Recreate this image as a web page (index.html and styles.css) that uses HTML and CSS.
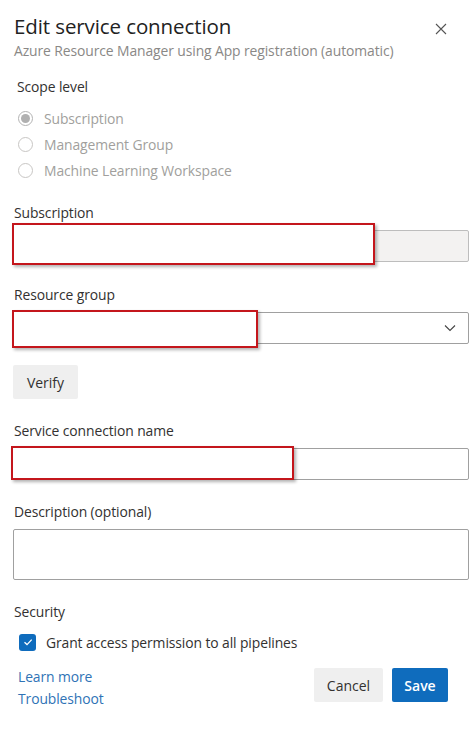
FILE: index.html
```html
<!DOCTYPE html>
<html lang="en">
<head>
<meta charset="utf-8">
<title>Edit service connection</title>
<link rel="stylesheet" href="styles.css">
</head>
<body>
<div class="panel">
  <header class="head">
    <div class="head-text">
      <h1 class="title">Edit service connection</h1>
      <div class="subtitle">Azure Resource Manager using App registration (automatic)</div>
    </div>
    <button class="close" aria-label="Close">
      <svg width="12" height="12" viewBox="0 0 12 12"><path d="M1 1 L11 11 M11 1 L1 11" stroke="#555" stroke-width="1.1" fill="none"/></svg>
    </button>
  </header>

  <div class="section scope">
    <div class="label">Scope level</div>
    <div class="radios">
      <div class="radio-row"><span class="radio checked"></span><span>Subscription</span></div>
      <div class="radio-row"><span class="radio"></span><span>Management Group</span></div>
      <div class="radio-row"><span class="radio"></span><span>Machine Learning Workspace</span></div>
    </div>
  </div>

  <div class="field f-sub">
    <div class="label">Subscription</div>
    <div class="box-wrap">
      <div class="input disabled"></div>
      <div class="redact r-sub"></div>
    </div>
  </div>

  <div class="field f-rg">
    <div class="label">Resource group</div>
    <div class="box-wrap">
      <div class="input select">
        <svg class="chev" width="12" height="8" viewBox="0 0 12 8"><path d="M1 1.5 L6 6.5 L11 1.5" stroke="#444" stroke-width="1.1" fill="none"/></svg>
      </div>
      <div class="redact r-rg"></div>
    </div>
  </div>

  <button class="btn verify">Verify</button>

  <div class="field f-name">
    <div class="label">Service connection name</div>
    <div class="box-wrap">
      <div class="input"></div>
      <div class="redact r-name"></div>
    </div>
  </div>

  <div class="field f-desc">
    <div class="label">Description (optional)</div>
    <div class="input textarea"></div>
  </div>

  <div class="section security">
    <div class="label">Security</div>
    <div class="check-row">
      <span class="checkbox">
        <svg width="12" height="12" viewBox="0 0 12 12"><path d="M2.5 6.3 L5 8.6 L9.7 3.6" stroke="#fff" stroke-width="1.3" fill="none"/></svg>
      </span>
      <span>Grant access permission to all pipelines</span>
    </div>
  </div>

  <footer class="foot">
    <div class="links">
      <a href="#">Learn more</a>
      <a href="#">Troubleshoot</a>
    </div>
    <div class="actions">
      <button class="btn cancel">Cancel</button>
      <button class="btn save">Save</button>
    </div>
  </footer>
</div>
</body>
</html>
```
FILE: styles.css
```css
* { box-sizing: border-box; }
html, body { margin: 0; padding: 0; background: #fff; }
body {
  font-family: "Open Sans", "Noto Sans", "Liberation Sans", sans-serif;
  color: #323130;
  width: 474px;
  height: 735px;
  overflow: hidden;
}
.panel {
  padding: 13px 5px 0 13px;
  display: flex;
  flex-direction: column;
}
.head {
  display: flex;
  justify-content: space-between;
  align-items: flex-start;
}
.title {
  margin: 0 0 0 1px;
  font-size: 20.5px;
  font-weight: 400;
  line-height: 26px;
  color: #222;
  letter-spacing: -0.1px;
}
.subtitle {
  margin: 1px 0 0 1px;
  font-size: 13.9px;
  line-height: 22px;
  color: #8a8886;
  letter-spacing: -0.1px;
}
.close {
  background: none;
  border: none;
  padding: 0;
  margin: 10px 22px 0 0;
  width: 12px;
  height: 12px;
  display: flex;
}
.label {
  font-size: 13.9px;
  line-height: 20px;
  color: #323130;
  font-weight: 400;
  letter-spacing: -0.1px;
}
.scope { margin-top: 15px; }
.scope .label { padding-left: 4px; }
.radios { margin-top: 8px; display: flex; flex-direction: column; }
.radio-row {
  display: flex;
  align-items: center;
  height: 26px;
  font-size: 13.9px;
  color: #a19f9d;
  padding-left: 5px;
  letter-spacing: -0.1px;
}
.radio {
  width: 15px;
  height: 15px;
  border-radius: 50%;
  border: 1px solid #c8c6c4;
  margin-right: 11px;
  display: inline-flex;
  align-items: center;
  justify-content: center;
  background: #fff;
}
.radio.checked { border-color: #b3b3b3; }
.radio.checked::after {
  content: "";
  width: 9px;
  height: 9px;
  border-radius: 50%;
  background: #b0b0b0;
}
.field { display: flex; flex-direction: column; }
.field .label { margin-bottom: 7px; padding-left: 1px; }
.f-sub { margin-top: 20px; }
.f-rg { margin-top: 23px; }
.f-name { margin-top: 22px; }
.f-desc { margin-top: 22px; }
.box-wrap { position: relative; }
.input {
  height: 32px;
  border: 1px solid #a0a0a0;
  border-radius: 2px;
  background: #fff;
}
.input.disabled { background: #f3f2f1; border-color: #bdbdbd; }
.input.select {
  display: flex;
  align-items: center;
  justify-content: flex-end;
  padding-right: 12px;
}
.input.textarea { height: 51px; }
.redact {
  position: absolute;
  background: #fff;
  border: 2px solid #c4161c;
  box-shadow: 2px 2px 3px rgba(0,0,0,0.3);
}
.r-sub { left: -1px; top: -7px; width: 363px; height: 42px; }
.r-rg { left: -1px; top: -2px; width: 246px; height: 38px; }
.r-name { left: -2px; top: -2px; width: 283px; height: 34px; }
.btn {
  font-family: inherit;
  font-size: 14px;
  border: none;
  border-radius: 2px;
  height: 34px;
  padding: 0 14px;
  cursor: pointer;
}
.verify {
  align-self: flex-start;
  margin-top: 21px;
  background: #efefef;
  color: #323130;
  width: 65px;
  padding: 0;
}
.security { margin-top: 22px; }
.security .label { padding-left: 1px; }
.check-row {
  display: flex;
  align-items: center;
  margin-top: 9px;
  padding-left: 6px;
  font-size: 13.9px;
  color: #323130;
  height: 22px;
  letter-spacing: -0.1px;
}
.checkbox {
  width: 17px;
  height: 17px;
  border-radius: 3px;
  background: #0f6cbd;
  display: inline-flex;
  align-items: center;
  justify-content: center;
  margin-right: 10px;
}
.foot {
  display: flex;
  justify-content: space-between;
  align-items: flex-start;
  margin-top: 15px;
  padding-right: 21px;
}
.links {
  display: flex;
  flex-direction: column;
  padding-left: 5px;
  margin-top: -2px;
}
.links a {
  font-size: 13.9px;
  line-height: 22px;
  color: #2f73b6;
  text-decoration: none;
  letter-spacing: -0.1px;
}
.actions { display: flex; gap: 9px; }
.cancel { background: #efefef; color: #323130; width: 69px; padding: 0; }
.save { background: #0f6cbd; color: #fff; font-weight: 600; width: 56px; padding: 0; }
```
